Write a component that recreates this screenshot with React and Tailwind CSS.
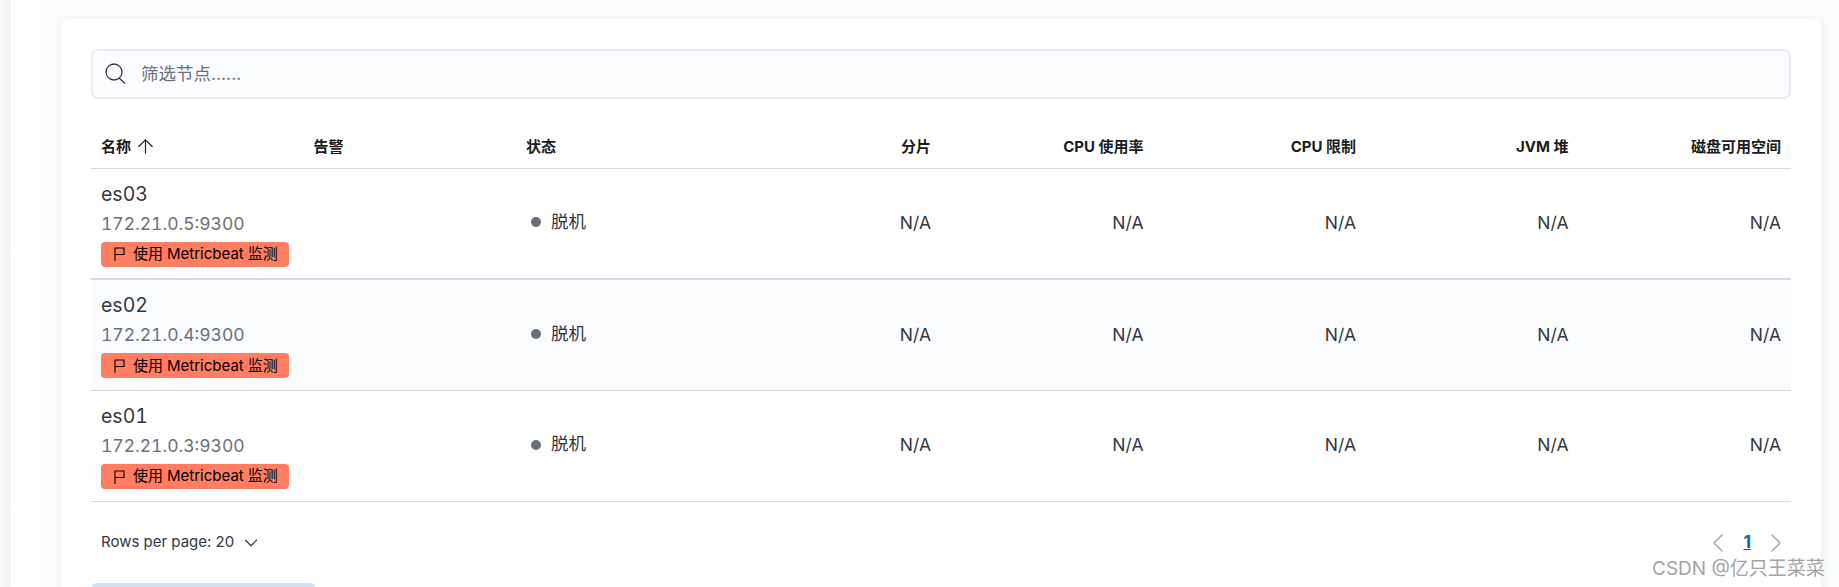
import React from 'react';
import { ArrowUp, ChevronDown, ChevronLeft, ChevronRight } from 'lucide-react';

const nodes = [
  { name: 'es03', addr: '172.21.0.5:9300' },
  { name: 'es02', addr: '172.21.0.4:9300' },
  { name: 'es01', addr: '172.21.0.3:9300' },
];

const metricColumns = ['分片', 'CPU 使用率', 'CPU 限制', 'JVM 堆', '磁盘可用空间'];

const SearchIcon = () => (
  <svg width="22" height="22" viewBox="0 0 22 22" fill="none" stroke="#343741" strokeWidth="1.3">
    <circle cx="9" cy="9" r="8" />
    <path d="M14 15L20 20.5" />
  </svg>
);

const FlagIcon = () => (
  <svg width="11" height="14" viewBox="0 0 11 14" fill="none" stroke="#000" strokeWidth="1.1">
    <path d="M1 14V1H10V7.5H1" />
  </svg>
);

const App = () => {
  return (
    <div className="relative flex h-[587px] overflow-hidden bg-[#fafbfd] font-['Inter','Noto_Sans_CJK_SC',sans-serif] text-[17.5px] text-[#343741]">
      {/* Side strips */}
      <div className="w-[11px] shrink-0 bg-linear-to-r from-[#fbfbfc] to-[#f1f2f5]" />
      <div className="w-[30px] shrink-0 bg-white" />

      <main className="flex-1 pl-[20px] pr-[18px] pt-[19px]">
        <div className="h-[600px] rounded-[7px] bg-white p-[30px] shadow-[0_2px_10px_rgba(0,0,0,0.07)]">
          {/* Search */}
          <div className="flex h-[50px] items-center gap-[14px] rounded-[7px] border-2 border-[#e9ebf3] bg-[#fbfcfd] pl-[12px]">
            <SearchIcon />
            <span className="text-[#69707d]">筛选节点......</span>
          </div>

          {/* Table */}
          <table className="mt-[30px] w-full table-fixed border-collapse">
            <thead>
              <tr className="h-[39px] border-b-[1.5px] border-[#d3dae6] text-[15px] font-semibold text-[#1a1c21]">
                <th className="px-[10px] pb-[3px] text-left">
                  <span className="flex items-center gap-[3px]">
                    名称 <ArrowUp size={23} strokeWidth={1.2} />
                  </span>
                </th>
                <th className="px-[10px] pb-[3px] text-left">告警</th>
                <th className="px-[10px] pb-[3px] text-left">状态</th>
                {metricColumns.map((col) => (
                  <th key={col} className="px-[10px] pb-[3px] text-right">{col}</th>
                ))}
              </tr>
            </thead>
            <tbody>
              {nodes.map((node, i) => (
                <tr
                  key={node.name}
                  className={`h-[111px] ${i === 0 ? 'border-b-[2.5px]' : 'border-b-[1.5px]'} border-[#d3dae6] ${i === 1 ? 'bg-[#fafbfd]' : ''}`}
                >
                  <td className="px-[10px] align-middle tabular-nums">
                    <div className="flex flex-col items-start">
                      <span className="-mt-[1px] text-[19.5px] leading-[30px]">{node.name}</span>
                      <span className="leading-[29px] text-[#69707d]">{node.addr}</span>
                      <span className="mt-[4px] flex h-[25px] w-[188px] items-center gap-[8px] rounded-[4px] bg-[#ff7e62] pl-[13px] text-[15px] text-black">
                        <FlagIcon />
                        使用 Metricbeat 监测
                      </span>
                    </div>
                  </td>
                  <td className="px-[10px]" />
                  <td className="px-[10px] pb-[2px]">
                    <span className="flex items-center gap-[10px] pl-[5px]">
                      <span className="h-[10px] w-[10px] rounded-full bg-[#69707d]" />
                      脱机
                    </span>
                  </td>
                  {metricColumns.map((col) => (
                    <td key={col} className="px-[10px] text-right">N/A</td>
                  ))}
                </tr>
              ))}
            </tbody>
          </table>

          {/* Pagination */}
          <div className="mt-[25px] flex h-[32px] items-center justify-between px-[10px] text-[15px]">
            <span className="flex items-center gap-[6px]">
              Rows per page: 20
              <ChevronDown size={22} strokeWidth={1.3} />
            </span>
            <span className="-mr-[11px] flex items-center gap-[9px]">
              <ChevronLeft size={32} strokeWidth={1.2} className="text-[#a2abba]" />
              <span className="text-[17.5px] font-bold text-[#006bb4] underline">1</span>
              <ChevronRight size={32} strokeWidth={1.2} className="text-[#a2abba]" />
            </span>
          </div>

          <div className="mt-[24px] h-[30px] w-[225px] rounded-[6px] bg-[#cce4f5]" />
        </div>
      </main>

      {/* CSDN watermark */}
      <span className="absolute left-[1652px] top-[555px] text-[19px] text-[#a3a3a3]">CSDN @亿只王菜菜</span>
    </div>
  );
};

export default App;
